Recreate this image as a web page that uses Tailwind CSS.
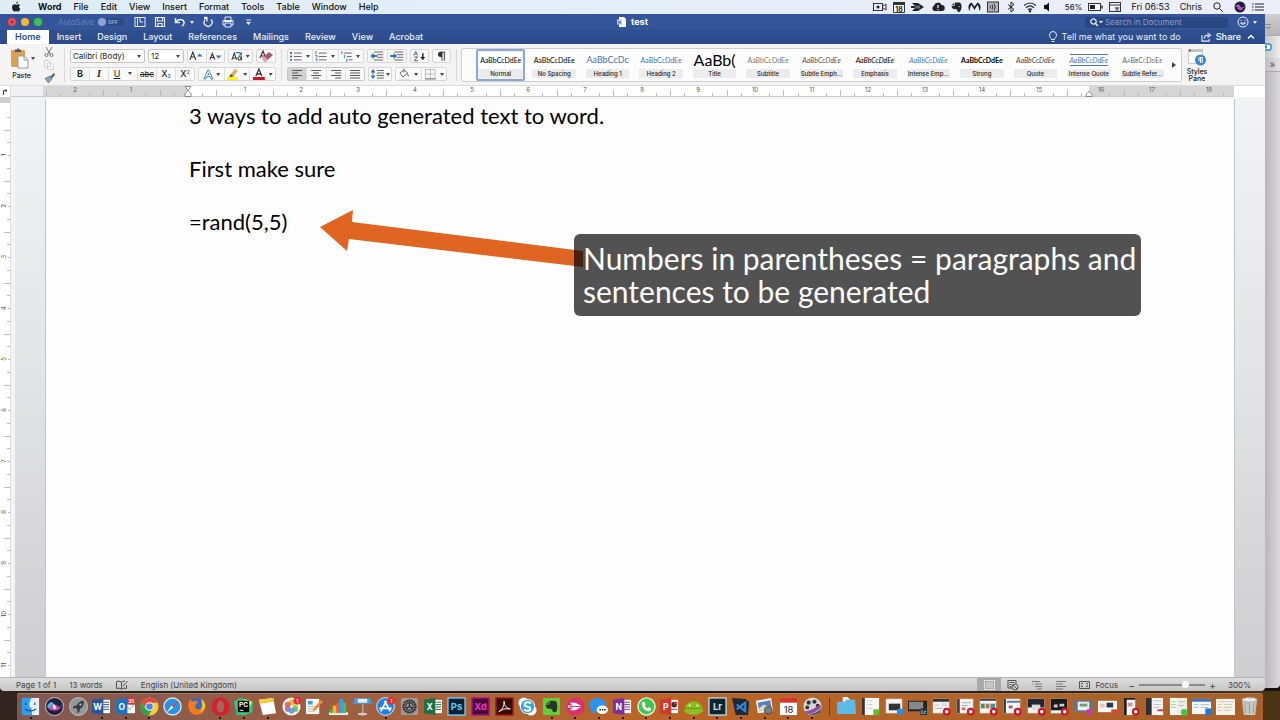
<!DOCTYPE html>
<html lang="en">
<head>
    <meta charset="UTF-8">
    <meta name="viewport" content="width=device-width, initial-scale=1.0">
    <title>test - Word</title>
    <!-- Tailwind CSS for styling -->
    <script src="https://cdn.jsdelivr.net/npm/@tailwindcss/browser@4"></script>
</head>
<body class="h-screen flex flex-col overflow-hidden bg-[#17100e] font-[Inter,sans-serif] text-[9px] leading-3 text-[#222]">

    <!-- System menu bar -->
    <header class="h-[14px] shrink-0 flex items-center justify-between bg-linear-to-r from-[#dfecf6] to-[#eceffa] pl-[10px] pr-4 text-[#111]">
        <nav class="flex items-center gap-3 font-medium">
            <a href="#" aria-label="Apple" class="mr-1">
                <svg class="w-3 h-3" viewBox="0 0 12 12" fill="#222"><path d="M8.100.6c.1 1-.8 2-1.900 2C6 1.600 7 .7 8.100.6zM10 4.100c-1.500 1-1.200 3 .3 3.600-.4 1.300-1.300 2.900-2.200 2.900-.7 0-.9-.4-1.800-.4s-1.200.4-1.800.4C3.300 10.600 2 8.300 2 6.300c0-2 1.200-3.100 2.500-3.100.8 0 1.300.5 1.900.5s1.100-.5 2.100-.5c.6 0 1.200.4 1.500.9z"/></svg>
            </a>
            <a href="#" class="font-bold">Word</a>
            <a href="#">File</a>
            <a href="#">Edit</a>
            <a href="#">View</a>
            <a href="#">Insert</a>
            <a href="#">Format</a>
            <a href="#">Tools</a>
            <a href="#">Table</a>
            <a href="#">Window</a>
            <a href="#">Help</a>
        </nav>
        <div class="flex items-center gap-[6px]">
            <svg class="w-[14px] h-3" viewBox="0 0 14 12" fill="none" stroke="#333"><rect x=".5" y="2.500" width="9" height="7"/><circle cx="5" cy="6" r="1.500" fill="#222" stroke="none"/><path d="M10 5l3-2v6l-3-2"/></svg>
            <svg class="w-3 h-3" viewBox="0 0 12 12"><path d="M.5 1.500h11v10H.5z" fill="#fff" stroke="#333"/><path d="M0 1h12v3H0z" fill="#333"/><text x="6" y="10.500" font-size="7" font-weight="700" text-anchor="middle" fill="#222">18</text></svg>
            <svg class="w-[14px] h-3" viewBox="0 0 14 12" fill="#222"><path d="M1 2h6l6 4-6 4H1l3-3H0V5h4z"/><path d="M4 5.200h5M4 6.800h5" stroke="#e8eef8" stroke-width=".5"/></svg>
            <svg class="w-[14px] h-3" viewBox="0 0 14 12"><path d="M3.500 10a3 3 0 0 1-.5-5.500 4 4 0 0 1 7.500-.5A3 3 0 0 1 11 10z" fill="#222"/><path d="M7 4v3M7 8v1" stroke="#fff" stroke-width="1.200"/></svg>
            <svg class="w-[11px] h-3" viewBox="0 0 12 12" fill="#222"><path d="M4 1h4c3 0 3.500 2 3.500 5S10 11.500 8.500 11.500 6.500 10 7 9c-2 0-2-1-2-1-2 1-4 0-4.500-3H3c1 0 1-1 1-2zM3 1.500V4H.5z"/><path d="M8.500 5.500l1 .2" stroke="#fff"/></svg>
            <svg class="w-[13px] h-3" viewBox="0 0 13 12" fill="#222"><path d="M3.500 1.500l3 4 3-4c3.500 1.500 4 6 1.500 8.500.3-2 0-4-1.500-6l-3 5-3-5C2 6 1.700 8 2 10-.5 7.500 0 3 3.500 1.500z"/></svg>
            <svg class="w-3 h-3" viewBox="0 0 12 12" fill="none" stroke="#333"><rect x=".5" y="1" width="11" height="10" fill="#b8b8bc"/><path d="M3 4.500q1 1.500 0 3M5 3.500q1.500 2.500 0 5M7 2.500q2.500 3.500 0 7"/></svg>
            <svg class="w-3 h-3" viewBox="0 0 12 12" fill="none" stroke="#222"><path d="M3 3.500l6 5L6 11V1l3 2.500-6 5"/></svg>
            <svg class="w-[14px] h-3" viewBox="0 0 14 12" fill="none" stroke="#222" stroke-width="1.200"><path d="M1 4.500q6-5 12 0M3 6.700q4-3.500 8 0M5 8.800q2-1.800 4 0"/><circle cx="7" cy="10.300" r=".6" fill="#222"/></svg>
            <svg class="w-2 h-3" viewBox="0 0 8 12" fill="#111"><path d="M1 4h2l3-2.500v9L3 8H1z"/></svg>
            <span class="text-[8px] ml-2">56%</span>
            <svg class="w-[15px] h-3" viewBox="0 0 15 12"><rect x=".5" y="2.500" width="12" height="7" fill="#f4f4f8" stroke="#333"/><path d="M2 4h5v4H2z" fill="#222"/><path d="M14 4.500v3" stroke="#333" stroke-width="1.500"/></svg>
            <svg class="w-3 h-3" viewBox="0 0 12 12"><rect x=".5" y="1.500" width="11" height="9" fill="#f5f5fa" stroke="#333"/><path d="M1 4h10" stroke="#333"/><text x="8" y="9.500" font-size="5" text-anchor="middle">⌘</text></svg>
            <span class="ml-1">Fri 06:53</span>
            <span class="ml-1">Chris</span>
            <svg class="w-3 h-3 ml-1" viewBox="0 0 12 12" fill="none" stroke="#222"><circle cx="5" cy="5" r="3.200"/><path d="M7.500 7.500L11 11"/></svg>
            <svg class="w-3 h-3 ml-1" viewBox="0 0 12 12"><circle cx="6" cy="6" r="5.500" fill="#1c1d3a"/><path d="M1 6q3-5 5-1t5-1q-1 5-5 3T1 6z" fill="#8b6bef"/><path d="M3 7q3-3 6 1-3 3-6-1z" fill="#d84da0"/></svg>
            <svg class="w-3 h-3" viewBox="0 0 12 12" stroke="#222" stroke-width="1.200"><path d="M0 3h1.500M3 3h9M0 6h1.500M3 6h9M0 9h1.500M3 9h9"/></svg>
        </div>
    </header>

    <div class="flex-1 min-h-0 flex">
        <!-- Word window -->
        <main class="flex-1 min-w-0 flex flex-col rounded-b-sm overflow-hidden">

            <!-- Title bar -->
            <div class="h-4 shrink-0 bg-[#34559a] grid grid-cols-3 items-center text-white">
                <div class="flex items-center pl-2">
                    <div class="flex gap-[5px]">
                        <button aria-label="Close" class="w-2 h-2 rounded-full bg-[#ee4b47] flex items-center justify-center"><span class="w-[2px] h-[2px] rounded-full bg-[#701010]"></span></button>
                        <button aria-label="Minimise" class="w-2 h-2 rounded-full bg-[#f5b62f]"></button>
                        <button aria-label="Zoom" class="w-2 h-2 rounded-full bg-[#36c748]"></button>
                    </div>
                    <label for="autosave" class="ml-4 text-[8px] text-[#6781b8]">AutoSave</label>
                    <span class="ml-1 w-[26px] h-2 rounded-full bg-[#2c4a89] flex items-center gap-[2px]">
                        <input id="autosave" type="checkbox" class="appearance-none w-2 h-2 rounded-full bg-[#8fa3cc]">
                        <span class="text-[5px] leading-none font-semibold text-[#a9b8da]">OFF</span>
                    </span>
                    <button aria-label="Sidebar" class="ml-[10px]"><svg class="w-3 h-3" viewBox="0 0 12 12" fill="none" stroke="#e6ecf8"><rect x="1" y="1.500" width="10" height="9"/><path d="M3.500 2v8M6 2v4h3"/></svg></button>
                    <button aria-label="Save" class="ml-2"><svg class="w-3 h-3" viewBox="0 0 12 12" fill="none" stroke="#e6ecf8" stroke-width="1.200"><path d="M1.500 1.500h9v9h-9zM3.500 2v3h5V2M4 10V7.500h4V10"/></svg></button>
                    <button aria-label="Undo" class="ml-2 flex items-center gap-1"><svg class="w-3 h-3" viewBox="0 0 12 12" fill="none" stroke="#e6ecf8" stroke-width="1.500"><path d="M1.500 2v4.500H6M2 6c2-3.500 7-3.500 8 0 .5 2-.5 3-2 4"/></svg><span class="border-x-2 border-x-transparent border-t-[3px] border-t-[#e6ecf8]"></span></button>
                    <button aria-label="Redo" class="ml-2"><svg class="w-3 h-3" viewBox="0 0 12 12" fill="none" stroke="#e6ecf8" stroke-width="1.300"><path d="M9 3.500A4 4 0 1 1 3 3.800M2 1.500h3.500M2 2.500h3v3"/></svg></button>
                    <button aria-label="Print" class="ml-2"><svg class="w-3 h-3" viewBox="0 0 12 12" fill="none" stroke="#e6ecf8"><path d="M3 4V1h6v3M3 9H1V4.500h10V9H9M3 7h6v4H3zM2 5.500h8"/></svg></button>
                    <button aria-label="Customise toolbar" class="ml-2"><svg class="w-3 h-3" viewBox="0 0 12 12" fill="#e6ecf8"><path d="M4 3.500h5v1H4zM4 6h5L6.500 9z"/></svg></button>
                </div>
                <h1 class="flex items-center justify-center gap-1 font-bold">
                    <svg class="w-[10px] h-[10px]" viewBox="0 0 10 10"><path d="M2 0h5l2 2v8H2z" fill="#fff"/><path d="M0 2.500h5v5H0z" fill="#c3cfe8"/><path d="M1 4l.8 2.500.7-2 .7 2L4 4" fill="none" stroke="#34559a" stroke-width=".6"/></svg>
                    test
                </h1>
                <div class="flex items-center justify-end gap-[9px] pr-2">
                    <div class="h-[11px] w-[143px] bg-[#2a4782] flex items-center pl-1">
                        <svg class="w-4 h-3 shrink-0" viewBox="0 0 16 12" fill="none" stroke="#e6ecf8" stroke-width="1.200"><circle cx="4.500" cy="5.500" r="2.700"/><path d="M6.500 7.500L9 10M10.500 5l1.500 1.500L13.500 5"/></svg>
                        <input aria-label="Search in Document" placeholder="Search in Document" class="min-w-0 flex-1 text-[8px] leading-none placeholder:text-[#8b9dc4]">
                    </div>
                    <button aria-label="Feedback" class="flex items-center gap-1"><svg class="w-3 h-3" viewBox="0 0 12 12" fill="none" stroke="#e6ecf8"><circle cx="6" cy="6" r="5"/><path d="M3.500 7q2.500 3 5 0zM4 4v1M8 4v1"/></svg><span class="border-x-2 border-x-transparent border-t-[3px] border-t-[#e6ecf8]"></span></button>
                </div>
            </div>

            <!-- Ribbon tabs -->
            <div class="h-[14px] shrink-0 bg-linear-to-b from-[#31508f] to-[#2b4a8c] flex justify-between text-[#e8edf8] font-medium">
                <nav class="flex pl-[7px]">
                    <button class="px-2 bg-white text-[#2b4f93] font-semibold">Home</button>
                    <button class="px-2">Insert</button>
                    <button class="px-2">Design</button>
                    <button class="px-2">Layout</button>
                    <button class="px-2">References</button>
                    <button class="px-2">Mailings</button>
                    <button class="px-2">Review</button>
                    <button class="px-2">View</button>
                    <button class="px-2">Acrobat</button>
                </nav>
                <div class="flex items-center pr-2">
                    <svg class="w-[10px] h-3 mr-1" viewBox="0 0 10 12" fill="none" stroke="#e6ecf8"><path d="M3.500 8.500C3.500 7 1.500 6.500 1.500 4a3.500 3.500 0 0 1 7 0c0 2.500-2 3-2 4.500zM3.500 10.500h3"/></svg>
                    <button class="font-normal">Tell me what you want to do</button>
                    <button class="ml-5 flex items-center gap-1 font-semibold"><svg class="w-[11px] h-3" viewBox="0 0 12 12" fill="none" stroke="#e6ecf8" stroke-width="1.200"><path d="M1 4v6.500h8V8M3.500 8c0-2.500 1.500-4 5-4M7 1.500L10.500 4 7 6.500"/></svg>Share</button>
                    <button aria-label="Collapse ribbon" class="ml-1"><svg class="w-3 h-3" viewBox="0 0 12 12" fill="none" stroke="#fff" stroke-width="1.400"><path d="M3 7.500l3-3 3 3"/></svg></button>
                </div>
            </div>

            <!-- Ribbon -->
            <div class="h-[42px] shrink-0 bg-[#f4f4f5] border-b border-[#dcdcdc] flex items-center">
                <div class="flex gap-1 pl-2 w-[65px] h-9 border-r border-[#dadada]">
                    <button class="flex flex-col items-center w-[27px] text-[7px] leading-[9px] font-medium">
                        <svg class="w-[26px] h-6" viewBox="0 0 26 24"><rect x="2" y="3" width="14" height="17" rx="1" fill="#dca053"/><path d="M6 5V2.500h2Q9-.5 10 2.500h2V5z" fill="#555"/><path d="M9 9h6l4 4v8H9z" fill="#fff" stroke="#999"/><path d="M15 9v4h4" fill="none" stroke="#999"/><path d="M22 10h4l-2 3z" fill="#444"/></svg>
                        Paste
                    </button>
                    <div class="flex flex-col items-center justify-between w-5">
                        <svg class="w-[10px] h-[10px]" viewBox="0 0 10 10" fill="none" stroke="#777"><path d="M2 0l4 7M8 0L4 7"/><circle cx="2.500" cy="8" r="1.500"/><circle cx="7.500" cy="8" r="1.500"/></svg>
                        <svg class="w-[10px] h-[10px]" viewBox="0 0 10 10" fill="#fafafa" stroke="#d3d3d3"><path d="M.5.5h4l2 2V7h-6zM3.500 3h4l2 2v4.500h-6z"/></svg>
                        <svg class="w-[11px] h-[10px]" viewBox="0 0 11 10"><path d="M10 0L6 4l1.500 1.500L11 2z" fill="#555"/><path d="M6 3L1 5.500 4.500 10 8 6z" fill="#84a6cf" stroke="#666" stroke-width=".7"/></svg>
                    </div>
                </div>

                <div class="flex flex-col gap-1 pl-[5px] pr-[5px] h-8 border-r border-[#dadada]">
                    <div class="flex gap-[3px] h-[14px]">
                        <span class="relative flex w-[75px]">
                            <select aria-label="Font" class="appearance-none w-full bg-white border border-[#c4c4c4] rounded-xs pl-[2px] text-[8px] leading-3"><option>Calibri (Body)</option></select>
                            <span class="absolute right-1 top-[6px] border-x-2 border-x-transparent border-t-[3px] border-t-[#444] pointer-events-none"></span>
                        </span>
                        <span class="relative flex w-[36px]">
                            <select aria-label="Font size" class="appearance-none w-full bg-white border border-[#c4c4c4] rounded-xs pl-[2px] text-[8px] leading-3"><option>12</option></select>
                            <span class="absolute right-1 top-[6px] border-x-2 border-x-transparent border-t-[3px] border-t-[#444] pointer-events-none"></span>
                        </span>
                        <div class="flex w-[38px] border border-[#d6d6d6] rounded-xs bg-[#fafafa] divide-x divide-[#d6d6d6]">
                            <button aria-label="Grow font" class="flex-1"><svg class="w-full h-3" viewBox="0 0 18 12" fill="none" stroke="#333" stroke-width="1.200"><path d="M2 10l3-8 3 8M3 7h4"/><path d="M9 6.500h6l-3-3z" fill="#2f78c4" stroke="none"/></svg></button>
                            <button aria-label="Shrink font" class="flex-1"><svg class="w-full h-3" viewBox="0 0 18 12" fill="none" stroke="#333" stroke-width="1.200"><path d="M3 9.500l2.500-6 2.500 6M4 7.500h3"/><path d="M9 5.500h6l-3 3z" fill="#2f78c4" stroke="none"/></svg></button>
                        </div>
                        <button aria-label="Change case" class="w-[25px] border border-[#d6d6d6] rounded-xs bg-[#fafafa]"><svg class="w-full h-3" viewBox="0 0 24 12" fill="none" stroke="#333" stroke-width="1.100"><path d="M3 10l2.500-7L8 10M4 8h3"/><circle cx="11" cy="8.500" r="1.700"/><path d="M13 6.500V10.500"/><path d="M7 2.500h4l2 2M13 2v3h-3" stroke="#2f78c4"/><path d="M17.500 5h4l-2 3z" fill="#444" stroke="none"/></svg></button>
                        <button aria-label="Clear formatting" class="w-5 border border-[#d6d6d6] rounded-xs bg-[#fafafa]"><svg class="w-full h-3" viewBox="0 0 18 12"><path d="M3 8l3-7 2 5M4 6h3" fill="none" stroke="#333" stroke-width="1.200"/><path d="M5 8l7-6 4 3-7 6.500H7z" fill="#a85a78"/><path d="M5 8l2-1.500 4 3L9 11.500H7z" fill="#e2a6bb"/></svg></button>
                    </div>
                    <div class="flex gap-[3px] h-[14px]">
                        <div class="flex w-[125px] border border-[#d6d6d6] rounded-xs bg-[#fafafa] divide-x divide-[#dedede] text-[#222]">
                            <button class="flex-1 font-bold">B</button>
                            <button class="flex-1 font-[Liberation_Serif] italic font-bold text-[10px]">I</button>
                            <button aria-label="Underline" class="w-[29px] flex items-center justify-center gap-2"><span class="underline">U</span><span class="border-x-2 border-x-transparent border-t-[3px] border-t-[#444]"></span></button>
                            <button class="flex-1 line-through text-[8px]">abc</button>
                            <button aria-label="Subscript" class="flex-1 font-medium">X<sub class="text-[5px] text-[#2f78c4] font-bold">2</sub></button>
                            <button aria-label="Superscript" class="flex-1 font-medium">X<sup class="text-[5px] text-[#2f78c4] font-bold">2</sup></button>
                        </div>
                        <div class="flex w-[78px] border border-[#d6d6d6] rounded-xs bg-[#fafafa] divide-x divide-[#dedede]">
                            <button aria-label="Text effects" class="flex-1"><svg class="w-full h-3" viewBox="0 0 25 12"><path d="M5 11l4-9h1l4 9h-2l-1-2.500H8L7 11z" fill="#fff" stroke="#3e7fca"/><path d="M8.500 7L9.500 4.500l1 2.500z" fill="#3e7fca"/><path d="M17.500 5h4l-2 3z" fill="#444"/></svg></button>
                            <button aria-label="Highlight" class="flex-1"><svg class="w-full h-3" viewBox="0 0 25 12"><path d="M2 9h11v3H2z" fill="#fdf40a"/><path d="M6 6l4-5 3 2-4 5z" fill="#e0b050"/><path d="M6 6l3 2-2 1H4z" fill="#555"/><path d="M18.500 5h4l-2 3z" fill="#444"/></svg></button>
                            <button aria-label="Font colour" class="flex-1"><svg class="w-full h-3" viewBox="0 0 25 12"><path d="M3 9h12v3H3z" fill="#cf1420"/><path d="M6 8l3-7 3 7M7 6h4" fill="none" stroke="#333" stroke-width="1.300"/><path d="M19 5h4l-2 3z" fill="#444"/></svg></button>
                        </div>
                    </div>
                </div>

                <div class="flex flex-col gap-1 pl-[5px] pr-[5px] h-8 border-r border-[#dadada]">
                    <div class="flex gap-[3px] h-[14px]">
                        <div class="flex w-[77px] border border-[#d6d6d6] rounded-xs bg-[#fafafa] divide-x divide-[#dedede]">
                            <button aria-label="Bullets" class="flex-1"><svg class="w-full h-3" viewBox="0 0 25 12"><path d="M2 2h2v2H2zM2 5.500h2v2H2zM2 9h2v2H2z" fill="#2f6fc0"/><path d="M6 3h8M6 6.500h8M6 10h8" stroke="#666"/><path d="M18.500 5h4l-2 3z" fill="#444"/></svg></button>
                            <button aria-label="Numbering" class="flex-1"><svg class="w-full h-3" viewBox="0 0 25 12"><path d="M3 1v3M2.500 5.500h1.500v2M2.500 9h1.500v2.500" fill="none" stroke="#2f6fc0"/><path d="M6 3h8M6 6.500h8M6 10h8" stroke="#666"/><path d="M18.500 5h4l-2 3z" fill="#444"/></svg></button>
                            <button aria-label="Multilevel list" class="flex-1"><svg class="w-full h-3" viewBox="0 0 25 12"><path d="M3 1v3M5.500 5v3M8 9v3" stroke="#2f6fc0"/><path d="M5 3h8M8 6.500h5M10 10h4" stroke="#666"/><path d="M17.500 5h4l-2 3z" fill="#444"/></svg></button>
                        </div>
                        <div class="flex w-10 border border-[#d6d6d6] rounded-xs bg-[#fafafa] divide-x divide-[#dedede]">
                            <button aria-label="Decrease indent" class="flex-1"><svg class="w-full h-3" viewBox="0 0 18 12"><path d="M6 2h9M9 4.700h6M9 7.300h6M6 10h9" stroke="#666"/><path d="M2 6l3.500-3v2H9v2H5.500v2z" fill="#2f6fc0"/></svg></button>
                            <button aria-label="Increase indent" class="flex-1"><svg class="w-full h-3" viewBox="0 0 18 12"><path d="M6 2h9M9 4.700h6M9 7.300h6M6 10h9" stroke="#666"/><path d="M9 6L5.500 3v2H2v2h3.500v2z" fill="#2f6fc0"/></svg></button>
                        </div>
                        <button aria-label="Sort" class="w-[19px] border border-[#d6d6d6] rounded-xs bg-[#fafafa]"><svg class="w-full h-3" viewBox="0 0 18 12" fill="none"><path d="M3 5.500L5 1l2 4.500M4 4h2" stroke="#2f6fc0"/><path d="M3.500 7h3.500l-3.500 4h4" stroke="#555"/><path d="M12.500 3v5" stroke="#222" stroke-width="1.500"/><path d="M10 7h5l-2.500 3.500z" fill="#222"/></svg></button>
                        <button aria-label="Show marks" class="w-[19px] border border-[#d6d6d6] rounded-xs bg-[#fafafa]"><svg class="w-full h-3" viewBox="0 0 18 12"><path d="M9.500 1.500H8a2.700 2.700 0 0 0 0 5.500h1.500z" fill="#333"/><path d="M9.500 2v9M12 2v9M8 2h5" stroke="#333"/></svg></button>
                    </div>
                    <div class="flex gap-[3px] h-[14px]">
                        <div class="flex w-[78px] border border-[#c9c9c9] rounded-xs bg-[#fafafa] divide-x divide-[#dedede]">
                            <button aria-label="Align left" class="flex-1 bg-[#d2d2d2]"><svg class="w-full h-3" viewBox="0 0 18 12" stroke="#555"><path d="M4 2.500h10M4 5h6M4 7.500h10M4 10h6"/></svg></button>
                            <button aria-label="Centre" class="flex-1"><svg class="w-full h-3" viewBox="0 0 18 12" stroke="#555"><path d="M4 2.500h10M6 5h6M4 7.500h10M6 10h6"/></svg></button>
                            <button aria-label="Align right" class="flex-1"><svg class="w-full h-3" viewBox="0 0 18 12" stroke="#555"><path d="M4 2.500h10M8 5h6M4 7.500h10M8 10h6"/></svg></button>
                            <button aria-label="Justify" class="flex-1"><svg class="w-full h-3" viewBox="0 0 18 12" stroke="#555"><path d="M4 2.500h10M4 5h10M4 7.500h10M4 10h10"/></svg></button>
                        </div>
                        <button aria-label="Line spacing" class="w-6 border border-[#d6d6d6] rounded-xs bg-[#fafafa]"><svg class="w-full h-3" viewBox="0 0 22 12"><path d="M4 1l2.500 3.500h-5zM4 11l2.500-3.500h-5zM3.500 4h1v4h-1z" fill="#2f6fc0"/><path d="M8 2.500h7M8 5h7M8 7.500h7M8 10h7" stroke="#666"/><path d="M17 5h4l-2 3z" fill="#444"/></svg></button>
                        <div class="flex w-[52px] border border-[#d6d6d6] rounded-xs bg-[#fafafa] divide-x divide-[#dedede]">
                            <button aria-label="Shading" class="flex-1"><svg class="w-full h-3" viewBox="0 0 25 12"><path d="M4 5l4-3 4 3-5 4z" fill="#fff" stroke="#666"/><path d="M8 .5v4" stroke="#666"/><path d="M11 5q3 2 1.500 4z" fill="#2f6fc0"/><path d="M3 11.500h11" stroke="#ddd"/><path d="M18.500 5h4l-2 3z" fill="#444"/></svg></button>
                            <button aria-label="Borders" class="flex-1"><svg class="w-full h-3" viewBox="0 0 25 12" fill="none" stroke="#bbb"><path d="M3.500 1.500h10v9M8.500 1v9M3.500 1v9M3 6h10"/><path d="M3 11h11" stroke="#555"/><path d="M18.500 5h4l-2 3z" fill="#444" stroke="none"/></svg></button>
                        </div>
                    </div>
                </div>

                <!-- Style gallery, filled in by the script below -->
                <div class="flex-1 min-w-0 ml-1 h-[34px] flex items-center border border-[#cfcfcf] rounded-xs bg-[#fcfcfc] pl-[14px]">
                    <div id="styleGallery" class="flex-1 min-w-0 grid grid-cols-13 gap-x-1"></div>
                    <button aria-label="More styles" class="w-[14px] flex justify-center"><span class="border-y-[3px] border-y-transparent border-l-4 border-l-[#444]"></span></button>
                </div>
                <button class="w-[30px] mr-[53px] flex flex-col items-center text-[7px] leading-[7px] font-medium">
                    <svg class="w-5 h-[18px] mb-[2px] shrink-0" viewBox="0 0 20 18"><path d="M1.500 1.500h14v14h-14z" fill="#fff" stroke="#ccc"/><path d="M1 1h15v3H1z" fill="#c5c5c8"/><circle cx="3" cy="2.500" r=".9" fill="#444"/><circle cx="13.500" cy="12" r="5.500" fill="#3a86d8"/><path d="M16 9.500h-3a1.500 1.500 0 0 0 0 3M13.500 9.500v5.500M15.200 9.500v5.500" fill="none" stroke="#fff"/></svg>
                    Styles<br>Pane
                </button>
            </div>

            <!-- Horizontal ruler -->
            <div class="h-[11px] shrink-0 flex bg-[#f1f1f3]">
                <div class="w-[11px] bg-white border-r border-[#ddd] flex items-center justify-center">
                    <svg class="w-2 h-2" viewBox="0 0 8 8" fill="none" stroke="#444"><path d="M2.500 7V2.500H6M5 1v3"/></svg>
                </div>
                <svg id="hRuler" class="flex-1 h-[11px] bg-white font-[Inter]"></svg>
            </div>

            <!-- Document canvas -->
            <div class="flex-1 min-h-0 flex">
                <div class="w-[15px] shrink-0 bg-[#f4f4f6]">
                    <svg id="vRuler" class="w-[11px] h-full bg-white border-r border-[#ddd] font-[Inter]"></svg>
                </div>
                <div class="flex-1 min-w-0 flex pt-[2px] bg-linear-to-b from-[#f2f3f5] via-[#e2e3e4] to-[#cecdd0]">
                    <article class="relative flex-1 ml-[30px] mr-[30px] bg-[#fdfdfd] border-x border-[#c4c4c6] pl-[143px] pt-1 font-[Lato,sans-serif] text-[22px] leading-[26px] text-black">
                        <p class="mb-[27px]">3 ways to add auto generated text to word.</p>
                        <p class="mb-[27px]">First make sure</p>
                        <p>=rand(5,5)</p>

                        <!-- Annotation drawn over the page -->
                        <svg class="absolute left-[274px] top-[111px] w-[264px] h-[60px]" viewBox="0 0 264 60"><path d="M0 17L33 0l-1 12 231 29v16L29 29l-2 12z" fill="#e06522"/></svg>
                        <div class="absolute left-[528px] top-[135px] w-[567px] h-[82px] rounded-md bg-black/68 pl-[9px] pr-1 pt-2 text-white text-[30px] leading-[33px]">Numbers in parentheses = paragraphs and sentences to be generated</div>
                    </article>
                </div>
            </div>

            <!-- Status bar -->
            <footer class="h-[14px] shrink-0 bg-linear-to-b from-[#dededf] to-[#c6c6c7] border-t border-[#b4b4b4] flex items-center justify-between pl-4 pr-[14px] text-[8px] text-[#444]">
                <div class="flex items-center gap-[13px]">
                    <span>Page 1 of 1</span>
                    <span>13 words</span>
                    <svg class="w-3 h-3" viewBox="0 0 12 12" fill="none" stroke="#555"><path d="M5.500 3Q3 1.500.5 2.500v7q2.500-1 5 .5 2.500-1.500 5-.5V6M5.500 3v7M5.500 3Q7 2 9 2M7 7l4.500-5"/></svg>
                    <span>English (United Kingdom)</span>
                </div>
                <div class="flex items-center">
                    <button aria-label="Print layout" class="w-6 h-[13px] bg-[#a9a9aa] flex items-center justify-center"><svg class="w-[11px] h-[10px]" viewBox="0 0 11 10" fill="none" stroke="#e4e4e4"><path d="M.5.5h10v9H.5zM2 3h7M2 5h7M2 7h7"/></svg></button>
                    <button aria-label="Web layout" class="ml-[6px]"><svg class="w-3 h-3" viewBox="0 0 12 12" fill="none" stroke="#555"><path d="M1 1.500h8v3M1 1v8h4M2.500 3.500h5M2.500 5.500h2M2.500 7.500h2"/><circle cx="8" cy="8" r="3"/><path d="M6 6l4 4"/></svg></button>
                    <button aria-label="Outline" class="ml-3"><svg class="w-3 h-3" viewBox="0 0 12 12" fill="none" stroke="#777"><path d="M1 2.500h8M4 5h7M4 7.500h7M6 10h5M1 5h1"/></svg></button>
                    <button aria-label="Draft" class="ml-3"><svg class="w-3 h-3" viewBox="0 0 12 12" stroke="#777"><path d="M1 2.500h10M1 5h7M1 7.500h10M1 10h7"/></svg></button>
                    <button class="ml-3 flex items-center gap-1"><svg class="w-3 h-3" viewBox="0 0 12 12" fill="none" stroke="#555"><path d="M.5 2.500h10v7H.5zM2.500 5.500V4.500H4M7 4.500h1.500v1M8.500 6.500v1H7M4 7.500H2.500v-1"/></svg>Focus</button>
                    <button aria-label="Zoom out" class="ml-[10px] w-[7px] text-[10px]">−</button>
                    <input type="range" aria-label="Zoom" min="0" max="100" value="73" class="ml-1 w-[66px] h-2 appearance-none bg-[linear-gradient(#8c8c8c,#8c8c8c)] bg-[length:100%_2px] bg-center bg-no-repeat [&::-webkit-slider-thumb]:appearance-none [&::-webkit-slider-thumb]:w-[7px] [&::-webkit-slider-thumb]:h-[7px] [&::-webkit-slider-thumb]:rounded-full [&::-webkit-slider-thumb]:bg-white">
                    <button aria-label="Zoom in" class="ml-1 w-[7px] text-[10px]">+</button>
                    <span class="ml-3">300%</span>
                </div>
            </footer>
        </main>

        <!-- Edge of the window behind -->
        <aside class="w-[15px] shrink-0 mb-[3px] rounded-tr-sm rounded-br-sm bg-linear-to-r from-[#b9b6bb] to-[#dddade] flex flex-col text-center">
            <div class="h-[22px] bg-linear-to-b from-[#cfcfcf] to-[#b5b5b5] border-b border-[#aaa]"><svg class="w-full h-full" viewBox="0 0 15 22" fill="none" stroke="#888"><path d="M0 11h6M0 14h5l-3 3"/></svg></div>
            <div class="h-[22px] bg-linear-to-r from-[#c6c4c8] to-[#eee]"><svg class="w-full h-full" viewBox="0 0 15 22"><rect x="-4" y="8" width="10" height="6" rx="2" fill="#fff" stroke="#2790d8" stroke-width="1.500"/><path d="M0 9.500h2v3H0z" fill="#2790d8"/></svg></div>
            <div class="h-[14px] bg-linear-to-r from-[#c0bec2] to-[#e2e0e4] border-b border-[#aaa] text-[10px] text-[#555]">»</div>
        </aside>
    </div>

    <!-- Dock -->
    <div class="h-[29px] shrink-0 pt-[2px] px-[17px] bg-linear-to-r from-[#33241f] via-[#1a0f0a] to-[#4a3413]">
        <div id="dock" class="h-[27px] flex rounded-t-xs border-t border-[#9d7a66] bg-linear-to-r from-[#7f5751] via-[#bb6527] to-[#a8602a] px-[2px]"></div>
    </div>

    <script>
        // Style gallery: sample text, caption, sample classes
        const styles = [
            ['AaBbCcDdEe', 'Normal', 'text-[7px] text-black'],
            ['AaBbCcDdEe', 'No Spacing', 'text-[7px] text-black'],
            ['AaBbCcDc', 'Heading 1', 'text-[9px] text-[#4a6fae]'],
            ['AaBbCcDdEe', 'Heading 2', 'text-[7px] text-[#4a6fae]'],
            ['AaBb(', 'Title', 'text-[16px] text-black'],
            ['AaBbCcDdEe', 'Subtitle', 'text-[7px] text-[#777]'],
            ['AaBbCcDdEe', 'Subtle Emph...', 'text-[7px] italic text-[#555]'],
            ['AaBbCcDdEe', 'Emphasis', 'text-[7px] italic text-black'],
            ['AaBbCcDdEe', 'Intense Emp...', 'text-[7px] italic text-[#4a7ac4]'],
            ['AaBbCcDdEe', 'Strong', 'text-[7px] font-bold text-black'],
            ['AaBbCcDdEe', 'Quote', 'text-[7px] italic text-[#444]'],
            ['AaBbCcDdEe', 'Intense Quote', 'text-[7px] italic text-[#4a7ac4] border-y border-[#4a7ac4]'],
            ['AaBbCcDdEe', 'Subtle Refer...', 'text-[7px] [font-variant:small-caps] text-[#666]']
        ];
        document.getElementById('styleGallery').innerHTML = styles.map(([sample, name, cls], i) => `
            <button class="min-w-0 h-8 p-px flex flex-col rounded-xs border-2 ${i === 0 ? 'border-[#8ea6d6] bg-[#eef1f8]' : 'border-transparent'}">
                <span class="w-full h-[18px] flex items-center justify-center bg-white"><span class="font-[Lato] leading-[10px] whitespace-nowrap ${cls}">${sample}</span></span>
                <span class="w-full h-[9px] bg-[#ececee] text-[6px] leading-[9px] font-medium whitespace-nowrap text-center">${name}</span>
            </button>`).join('');

        // Horizontal ruler, one centimetre is 56.7px at this zoom
        const CM = 56.7;
        let h = '<rect x="32" width="145" height="11" fill="#d6d6d7"/><rect x="1078" width="145" height="11" fill="#d6d6d7"/><rect width="32" height="11" fill="#f1f1f3"/>';
        for (let q = -10; q <= 73; q++) {
            const x = Math.round(177 + q * CM / 4);
            if (q % 4 === 0) {
                if (q !== 0 && q !== 64) h += `<text x="${x}" y="6" font-size="6" text-anchor="middle" fill="#555">${Math.abs(q / 4)}</text>`;
                if (q === 64) h += `<text x="${x + 6}" y="6" font-size="6" text-anchor="middle" fill="#555">16</text>`;
            } else {
                h += `<path d="M${x}.5 ${q % 2 === 0 ? 4 : 7}V10" stroke="#bbb"/>`;
            }
        }
        h += '<path d="M0 10.500h1223" stroke="#ccc"/>';
        h += '<path d="M174 .5h6l-3 4 3 3v3h-6v-3l3-3zM1078 5.500l3 3v2h-6v-2z" fill="#fff" stroke="#888"/>';
        document.getElementById('hRuler').innerHTML = h;

        // Vertical ruler, text rotated to read upwards
        let v = '<rect width="11" height="6" fill="#cfcfcf"/>';
        for (let q = 1; q <= 45; q++) {
            const y = Math.round(7 + q * 51 / 4);
            if (q % 4 === 0) {
                v += `<text transform="translate(6 ${y}) rotate(-90)" font-size="6" text-anchor="middle" fill="#555">${q / 4}</text><path d="M8 ${y}.5h3" stroke="#bbb"/>`;
            } else {
                v += `<path d="M${q % 2 === 0 ? 4 : 7} ${y}.5h7" stroke="#bbb"/>`;
            }
        }
        document.getElementById('vRuler').innerHTML = v;

        // Small building blocks shared by the dock icons
        const tile = (fill, stroke) => `<rect x="1" y="1" width="18" height="18" fill="${fill}" stroke="${stroke}" stroke-width="1.500"/>`;
        const word = (t, fill, size, x = 10, y = 14) => `<text x="${x}" y="${y}" font-size="${size}" font-weight="700" text-anchor="middle" fill="${fill}">${t}</text>`;
        const office = (c, t) => `<path d="M9 3h10v14H9z" fill="#fff"/><path d="M12 5.500h6M12 8h6M12 10.500h6M12 13h6" stroke="${c}"/><path d="M0 3l12-2v18L0 17z" fill="${c}"/>${word(t, '#fff', 9, 6, 13.5)}`;
        const badge = t => `<circle cx="16" cy="4" r="4" fill="#e8282d"/>${word(t, '#fff', 5, 16, 6)}`;
        const thumb = (lines, mark) => `<path d="M1 2h17v15H1z" fill="#f6f6f6" stroke="#bbb" stroke-width=".5"/>${lines}${mark}`;
        const opera = '<circle cx="15.500" cy="15.500" r="3" fill="#fff" stroke="#d01528" stroke-width="2.200"/>';

        // name, running, drawing
        const apps = [
            ['Finder', 1, '<path d="M1 1h18v18H1z" fill="#e4eef8"/><path d="M1 1h10q-3 5-2 10h2q0 5 1 8H1z" fill="#2ba0ee"/><path d="M5 6v2.500M14.500 6v2.500M4 12.500q6 4.500 12 0" fill="none" stroke="#14385f" stroke-width="1.200"/>'],
            ['Siri', 0, '<circle cx="10" cy="10" r="9.500" fill="#23203f" stroke="#ccc"/><path d="M2 10q5-9 8-1t8-2q-2 8-8 5-4 4-8-2z" fill="#4ab8e8"/><path d="M4 12q6-8 12 0-6 5-12 0z" fill="#d646a8"/><path d="M8 9l2-1 2 4-3 1z" fill="#fff"/>'],
            ['Launchpad', 0, '<circle cx="10" cy="10" r="9.500" fill="#93979b" stroke="#bfc3c6"/><path d="M15.500 4q-5 0-7.500 5l-3 .5-1 2.500 3-.5 2 2L8.500 17l2.500-1.500.5-3Q16 10 15.500 4z" fill="#383d42"/><circle cx="12" cy="8" r="1.200" fill="#bbb"/>'],
            ['Word', 1, office('#2a5699', 'W')],
            ['Outlook', 1, '<path d="M9 8h11v9H9z" fill="#fff"/><path d="M9 8l5.500 5L20 8" fill="none" stroke="#999"/><path d="M0 3l12-2v18L0 17z" fill="#1574c4"/>' + word('O', '#fff', 9, 6, 13.5) + badge('35')],
            ['Chrome', 1, '<circle cx="10" cy="10" r="9.500" fill="#f7cc2f"/><path d="M1.500 5.500A9.500 9.500 0 0 1 18.500 6H10L6 12z" fill="#dd4b3e"/><path d="M1.500 5.500a9.500 9.500 0 0 0 7.500 14l4.500-7.500-7.500.5z" fill="#2ea152"/><circle cx="10" cy="10" r="4.500" fill="#fff"/><circle cx="10" cy="10" r="3.500" fill="#4587ed"/>'],
            ['Safari', 0, '<circle cx="10" cy="10" r="9" fill="#2793e6" stroke="#dfe3e6" stroke-width="1.500"/><path d="M16 4l-5 7-2-2z" fill="#e8413c"/><path d="M4 16l5-7 2 2z" fill="#fff"/>'],
            ['Firefox', 0, '<circle cx="10.500" cy="9.500" r="8.500" fill="#2e6bc4"/><path d="M1 8L3 2l2.500 3q3-2 6 0l-2 3q-2 3 1 5 4 1 5-3l.5-8q5 5 3 11-3 6-9 6Q2 19 1 8z" fill="#f27b1b"/><path d="M15 2q6 5 3 11-3 3-5 3 4-3 3-8z" fill="#fbc531"/>'],
            ['Opera', 1, '<ellipse cx="10" cy="10" rx="9.500" ry="9.500" fill="#d4202f"/><ellipse cx="10" cy="10" rx="4" ry="6.500" fill="#a4645a"/>'],
            ['PyCharm', 1, '<path d="M0 5l6-4 8 2 6 2-1 11-7 3H3z" fill="#28cf8a"/><path d="M10 2l9 3-2 5z" fill="#f2ec4c"/><path d="M4 4h12v12H4z" fill="#000"/>' + word('PC', '#fff', 7, 10, 11) + '<path d="M6 14h4" stroke="#fff"/>'],
            ['Notes', 1, '<path d="M1 3l15-2 3 16-14 2z" fill="#fff"/><path d="M1 3l15-2 1 4L2 7z" fill="#f7c93b"/>'],
            ['Photos', 0, '<circle cx="10" cy="10" r="9.500" fill="#f3f3f3"/><g fill-opacity=".85"><circle cx="10" cy="5.500" r="3" fill="#f5a32b"/><circle cx="14" cy="8" r="3" fill="#d3d63c"/><circle cx="14" cy="12.500" r="3" fill="#5db86b"/><circle cx="10" cy="14.500" r="3" fill="#45a0cf"/><circle cx="6" cy="12.500" r="3" fill="#8d6bc0"/><circle cx="6" cy="8" r="3" fill="#e5504f"/></g>' + badge('1')],
            ['Pages', 0, '<path d="M1 2h14v16H1z" fill="#f7f7f3"/><path d="M3 4h5v4H3z" fill="#4d9ed8"/><path d="M3 10h9M3 12.500h8M3 15h7" stroke="#bbb"/><path d="M9 12l8-9 2 2-8 9-3 1z" fill="#f08a24"/>'],
            ['Numbers', 0, '<path d="M0 19v-3h20v3z" fill="#eee"/><path d="M1 13h3v4H1z" fill="#2fbf58"/><path d="M4 9h4v8H4z" fill="#f6b32c"/><path d="M8 6h3v11H8z" fill="#ef5a46"/><path d="M11 2h4v15h-4z" fill="#31a6e0"/><path d="M15 6h3v11h-3z" fill="#43c55c"/>'],
            ['Keynote', 0, '<path d="M2 1h16l2 6H0z" fill="#3f9de0"/><path d="M5 2h10v4H5z" fill="#eee"/><path d="M9.500 7h1.500v10H9.500z" fill="#aaa"/><ellipse cx="10" cy="18" rx="5" ry="1.500" fill="#ccc"/>'],
            ['App Store', 1, '<circle cx="10" cy="10" r="9.300" fill="#1c83ee" stroke="#e5eefa"/><path d="M11 4L5 15M9 4l6 11M3.500 12h13" stroke="#fff" stroke-width="1.800"/>' + badge('1')],
            ['System Preferences', 0, '<rect x="1" y="1" width="18" height="18" rx="2" fill="#9b9b9d"/><circle cx="10" cy="10" r="6.500" fill="#737375" stroke="#2e2e30" stroke-width="2" stroke-dasharray="2 .6"/><circle cx="10" cy="10" r="4" fill="#98989a" stroke="#333"/><path d="M10 10V6M10 10l3.500 2M10 10l-3.500 2" stroke="#222" stroke-width="1.300"/>'],
            ['Excel', 0, office('#1e7145', 'X')],
            ['Photoshop', 0, tile('#07233a', '#79c8ec') + word('Ps', '#68c4f2', 10)],
            ['Adobe XD', 0, tile('#470137', '#b01685') + word('Xd', '#f236c4', 10)],
            ['Acrobat', 0, tile('#3b0709', '#96201b') + '<path d="M4 15.500q6-4 5.500-11Q10 12 16 12.500 9 11 4 15.500z" fill="none" stroke="#fff"/>'],
            ['Skype', 0, '<circle cx="10" cy="10" r="8" fill="#fff"/><circle cx="6" cy="6" r="5.500" fill="#fff"/><circle cx="14" cy="14" r="5.500" fill="#fff"/><circle cx="10" cy="10" r="7" fill="#2da7df"/><path d="M13.500 7Q12 5 9.500 5.500T7 8q0 2 3 2.200t3 2.300q-.5 2-3 2T6.500 13" fill="none" stroke="#fff" stroke-width="2.200"/>'],
            ['Evernote', 1, '<rect x="1" y="1" width="18" height="18" rx="1" fill="#5fd036"/><path d="M8 4h3c4 0 5 1 5 6s-1 6-3 6-3-2-2-3c-1 0-2 0-2-1-3 1-5 0-5-4h3c1 0 1-1 1-2zM7 4.500V7H4.500z" fill="#29352c"/>'],
            ['Skitch', 1, '<circle cx="10" cy="10" r="9.500" fill="#dc2c73"/><path d="M4 6h6l7 4-7 4H4l3-3H2V9h5z" fill="#fff"/><path d="M4 10h13" stroke="#dc2c73"/>'],
            ['Messages', 1, '<ellipse cx="9" cy="8.500" rx="9" ry="7.500" fill="#2a95f1"/><path d="M4 13l-1 5 6-3z" fill="#2a95f1"/><ellipse cx="14" cy="13.500" rx="6" ry="4.500" fill="#fff"/><path d="M11 13.500h1.500M13.500 13.500H15M16 13.500h1.500" stroke="#111" stroke-width="1.500"/>'],
            ['OneNote', 1, office('#7d2fa0', 'N')],
            ['WhatsApp', 1, '<circle cx="10" cy="10" r="9" fill="#3bc750" stroke="#eafbe9" stroke-width="1.400"/><path d="M6 5l2 0 1 3-1 1q1 2 3 3l1-1.500 3 1.500q-.5 3-3 3Q6 14 5 8q0-2 1-3z" fill="#fff"/>'],
            ['PowerPoint', 1, '<path d="M9 3h10v14H9z" fill="#fff"/><circle cx="15" cy="8" r="3" fill="#333"/><path d="M15 8V5h3v3z" fill="#d33"/><path d="M12 13h6" stroke="#d33"/><path d="M0 3l12-2v18L0 17z" fill="#d0382e"/>' + word('P', '#fff', 9, 6, 13.5)],
            ['Android', 1, '<path d="M0 15a10 10.500 0 0 1 20 0q-4 4-10 4T0 15z" fill="#8fbc20"/><path d="M5 1l2 4M15 1l-2 4M0 12h20" stroke="#6a9414"/><circle cx="6" cy="9" r="1" fill="#fff"/><circle cx="14" cy="9" r="1" fill="#fff"/>'],
            ['Lightroom', 1, tile('#0d2531', '#b8d2de') + word('Lr', '#c4e2ee', 10)],
            ['VS Code', 1, '<path d="M1 1l14 1 4 3-1 14H5z" fill="#1b2a3a"/><path d="M6 8l9 7V6l-9 7" fill="none" stroke="#2a8fe0" stroke-width="2"/>'],
            ['Preview', 1, '<path d="M1 4l16-3 2 14-16 2z" fill="#f1f1f1"/><path d="M3 6l13-2.500 1.500 10-13 1.500z" fill="#587fbd"/><path d="M4 12l5-4 8 3v3l-13 1z" fill="#d9d4c0"/><circle cx="14" cy="14" r="4" fill="#78818a" stroke="#444"/>'],
            ['Calendar', 1, '<path d="M1 1h18v18H1z" fill="#fff"/><path d="M1 1h18v5H1z" fill="#d8352c"/><text x="10" y="16.500" font-size="10" text-anchor="middle" fill="#222">18</text>'],
            ['Screenflow', 1, '<circle cx="10" cy="10" r="9.500" fill="#d6d6d6"/><circle cx="6" cy="6" r="2.200" fill="#333"/><circle cx="12" cy="5" r="2.200" fill="#333"/><circle cx="15.500" cy="9" r="2" fill="#333"/><circle cx="4.500" cy="11" r="2" fill="#333"/><path d="M2 15Q9 15 18 8l1 3q-7 7-15 7z" fill="#9149a6"/><path d="M5 18q8 0 14-6l-1 4q-5 5-13 2z" fill="#52525a"/>']
        ];
        const windows = [
            ['Downloads', '<path d="M6 0h5l3 3-1 6H6z" fill="#eee"/><path d="M0 5h8l2-2h9l1 15H0z" fill="#5db9e6"/>'],
            ['Evernote note', '<path d="M1 1h18v18H1z" fill="#f7f7f7"/><path d="M1 1h3v18H1z" fill="#333"/><path d="M6 4h6M6 8h6M6 12h6" stroke="#ccc"/><path d="M13 13h6v6h-6z" fill="#55c234"/>'],
            ['App Store window', thumb('<path d="M4 7h12v7H4z" fill="#333"/>', '<circle cx="16" cy="15.500" r="3.500" fill="#2a8cec"/>')],
            ['Lightroom window', '<path d="M0 4h20v11H0z" fill="#222"/><path d="M1 5h15v8H1z" fill="#888"/><path d="M13 12h7v7h-7z" fill="#15394a"/>' + word('Lr', '#bde', 5, 16.5, 17.5)],
            ['Opera window 1', thumb('<path d="M1 2h17v3H1z" fill="#333"/><path d="M3 7h5v3H3zM10 6h6v4h-6z" fill="#ddd"/><path d="M3 12h8" stroke="#aaa"/>', opera)],
            ['Opera window 2', thumb('<path d="M1 2h3v15H1z" fill="#444"/><path d="M6 6h10M6 9h7" stroke="#aaa"/><path d="M6 11h4v3H6z" fill="#d66"/>', opera)],
            ['Opera window 3', thumb('<path d="M1 2h17v2H1z" fill="#444"/><path d="M2 7h4v5H2z" fill="#4d8a70"/><path d="M7 7h4v5H7z" fill="#b97742"/><path d="M12 7h5v5h-5z" fill="#589"/>', opera)],
            ['Opera window 4', thumb('<path d="M1 2h2v15H1z" fill="#333"/><path d="M4 5h14" stroke="#4779b5" stroke-width="2"/><path d="M6 9h4v3H6z" fill="#b55"/>', opera)],
            ['Opera window 5', thumb('<path d="M1 2h17v9H1z" fill="#202635"/><path d="M5 8h9v6H5z" fill="#ddd"/>', opera)],
            ['Opera window 6', thumb('<path d="M1 2h17v12H1z" fill="#18191c"/><path d="M4 8h4v3H4zM10 7h5v3h-5z" fill="#ccc"/>', opera)],
            ['Skitch window', '<path d="M0 3h20v13H0z" fill="#6b7380"/><path d="M4 5h12v9H4z" fill="#edf1ea"/><path d="M6 7h8v3H6z" fill="#66a07c"/><circle cx="16" cy="16" r="3.500" fill="#c43ca0"/>'],
            ['PowerPoint window', '<path d="M0 4h20v12H0z" fill="#f7f7f7"/><path d="M9 6h7v5H9z" fill="#29384c"/><path d="M2 7h5v4H2z" fill="#e8c6b8"/><path d="M14 13h6v6h-6z" fill="#d34c36"/>'],
            ['Opera window 7', '<path d="M3 1h12v18H3z" fill="#f6f6f6"/><path d="M3 1h3v18H3zM6 1h9v2H6z" fill="#222"/><path d="M7 6h5v4H7z" fill="#c99"/>' + opera],
            ['Calendar window', '<path d="M1 1h18v18H1z" fill="#f4f4f4"/><path d="M1 1h6v18H1z" fill="#2c2f35"/><path d="M9 4h8M9 8h8M9 11h6" stroke="#bbb"/><path d="M13 13h6v6h-6z" fill="#fff"/><path d="M13 13h6v2h-6z" fill="#d33"/>'],
            ['WhatsApp window', '<path d="M1 1h18v18H1z" fill="#eeeee2"/><path d="M1 1h7v18H1z" fill="#f8f8f8"/><path d="M2 5h5M2 8h5M2 11h5M10 5h7M10 9h6" stroke="#a9c5a5"/><circle cx="16" cy="16" r="3.500" fill="#3bc750"/>'],
            ['Outlook window', '<path d="M0 2h20v16H0z" fill="#f4f7fb"/><path d="M0 2h20v3H0z" fill="#3c79b9"/><path d="M2 8h5M2 11h5M9 8h9M9 11h8" stroke="#a8bfd6"/><path d="M14 12h6v7h-6z" fill="#1b7bd0"/>'],
            ['Finder window', '<path d="M0 2h20v17H0z" fill="#f5f2e9"/><path d="M2 5h16M2 8h4M8 8h9M2 11h4M8 11h9M2 14h4M8 14h7" stroke="#cec6ad"/>'],
            ['Bin', '<path d="M2 3h16l-2 16H4z" fill="#c5c7c8"/><path d="M5 6l1 11M10 6v11M15 6l-1 11" stroke="#999"/><ellipse cx="10" cy="3" rx="8" ry="2.300" fill="#eee" stroke="#aaa"/><path d="M5 3l3-2 3 2 3-2 2 2" fill="#fff" stroke="#ccc"/>']
        ];
        const dockItem = (name, running, art) => `
            <button aria-label="${name}" class="flex-1 min-w-0 flex flex-col items-center pt-[3px]">
                <svg class="w-[19px] h-[19px] shrink-0" viewBox="0 0 20 20">${art}</svg>
                <span class="w-[2px] h-[2px] mt-px rounded-full ${running ? 'bg-black' : ''}"></span>
            </button>`;
        document.getElementById('dock').innerHTML =
            apps.map(a => dockItem(...a)).join('') +
            '<div class="w-[11px] flex justify-center py-1"><span class="w-px bg-black/40"></span></div>' +
            windows.map(([name, art]) => dockItem(name, 0, art)).join('');
    </script>
</body>
</html>
